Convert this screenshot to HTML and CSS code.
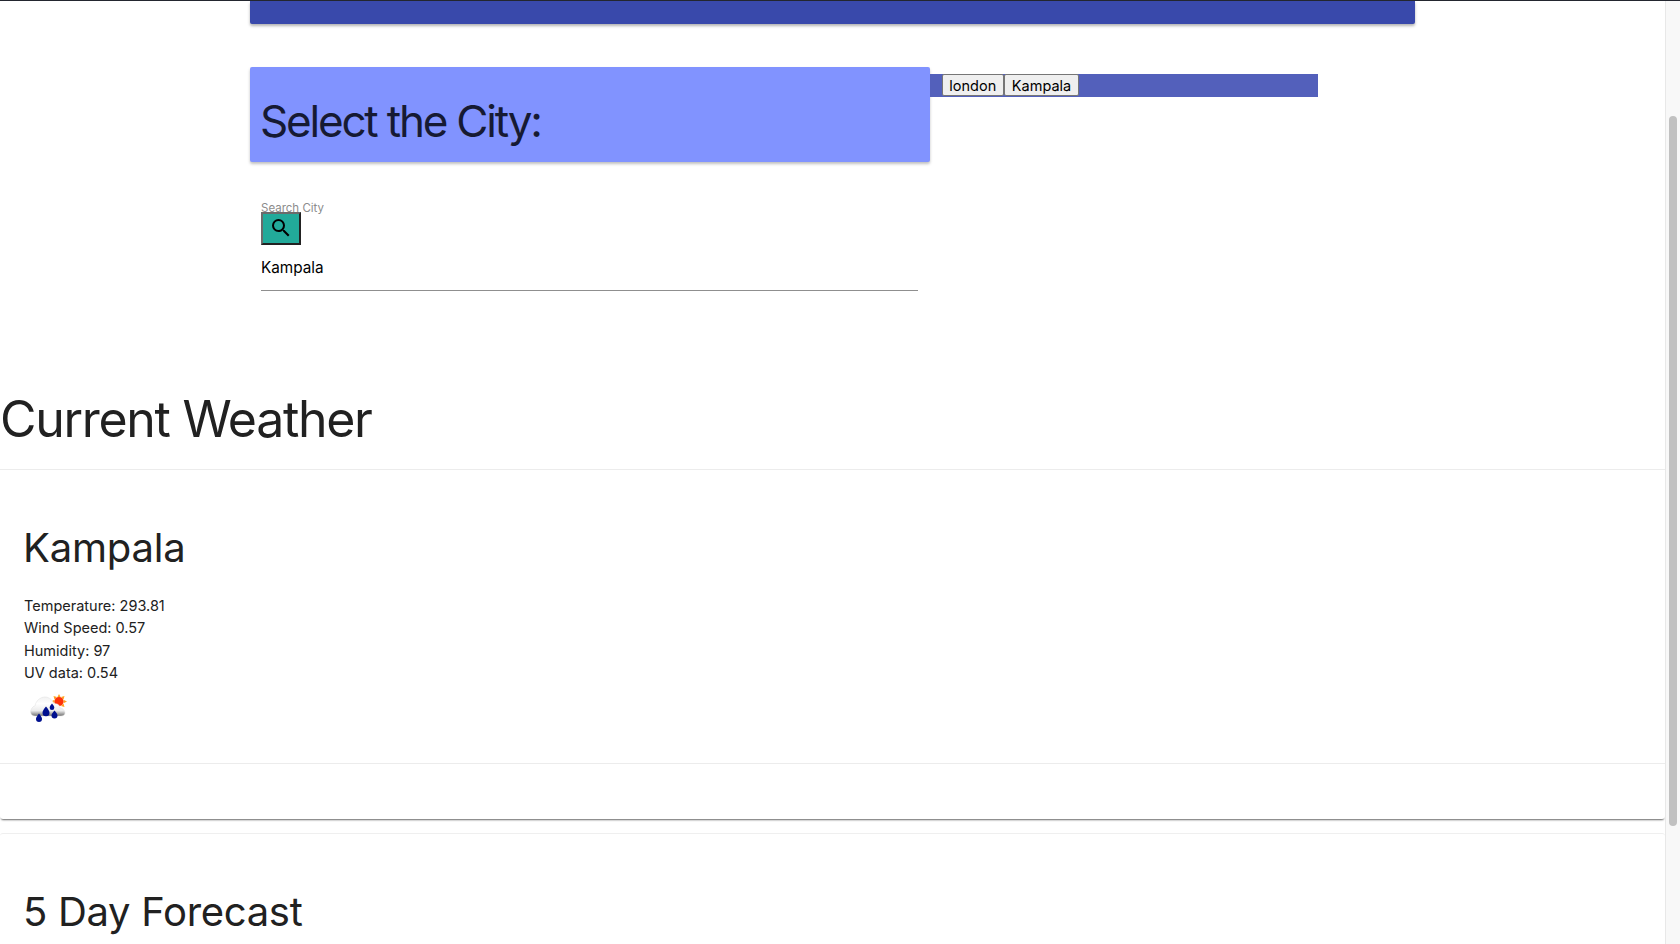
FILE: index.html
```html
<!DOCTYPE html>
<html>
<head>
  <title>Weather Dashboard</title>
  <meta name="viewport" content="width=device-width, initial-scale=1.0">
  <link rel="stylesheet" href="styles.css">
</head>
<body>
  <div class="page">
    <main class="content">
      <div class="wrapper">
        <header class="topbar"></header>

        <div class="city-row">
          <div class="city-box">
            <h2>Select the City:</h2>
          </div>
          <div class="history">
            <button class="history-btn">london</button>
            <button class="history-btn">Kampala</button>
          </div>
        </div>

        <form class="search">
          <label class="search-label">Search City</label>
          <button class="search-btn" type="button">
            <svg viewBox="0 0 24 24" width="24" height="24"><path d="M15.5 14h-.79l-.28-.27A6.471 6.471 0 0 0 16 9.5 6.5 6.5 0 1 0 9.5 16c1.61 0 3.09-.59 4.23-1.57l.27.28v.79l5 4.99L20.49 19l-4.99-5zm-6 0C7.01 14 5 11.99 5 9.5S7.01 5 9.5 5 14 7.01 14 9.5 11.99 14 9.5 14z"/></svg>
          </button>
          <div class="search-value">Kampala</div>
        </form>
      </div>

      <section class="current">
        <h1 class="current-title">Current Weather</h1>
        <div class="card">
          <div class="card-body">
            <h2 class="card-city">Kampala</h2>
            <p class="stat">Temperature: 293.81</p>
            <p class="stat">Wind Speed: 0.57</p>
            <p class="stat">Humidity: 97</p>
            <p class="stat">UV data: 0.54</p>
            <svg class="weather-icon" viewBox="0 0 37 28" width="37" height="28">
              <defs>
                <linearGradient id="cloud" x1="0" y1="0" x2="0" y2="1">
                  <stop offset="0" stop-color="#f1f1f1"/>
                  <stop offset="0.35" stop-color="#fff"/>
                  <stop offset="0.72" stop-color="#ececec"/>
                  <stop offset="1" stop-color="#6f6f6f"/>
                </linearGradient>
              </defs>
              <path d="M29 0l1.800 3.500h-3.600zM37 7.500l-3.500 1.800V5.700zM21 7.500l3.500-1.800v3.600zM23.500 2l3.500 1-2.500 2.500zM34.500 2L33.500 5.500 31 3zM34.500 13L31 12l2.500-2.500z" fill="#ffa321"/>
              <circle cx="29" cy="7.500" r="4.500" fill="#ff3208"/>
              <path d="M5 22C1 22 0 18 1 16c1-3 3-4 4-4C6 6 11 3 15 3c5 0 8 4 9 7 3-1 6 1 6 4 3 0 5 3 5 5 0 2-2 3-4 3z" fill="url(#cloud)" stroke="#dedede" stroke-width="0.500"/>
              <g fill="#00108f">
                <path d="M9 19.500c2 2.500 3 4 3 5.500a3 3 0 0 1-6 0c0-1.500 1-3 3-5.500z"/>
                <path d="M16 12.500c2.200 2.700 3.500 4.500 3.500 6.300a3.500 3.500 0 0 1-7 0c0-1.800 1.300-3.600 3.500-6.300z"/>
                <path d="M22 9.500c1.500 1.800 2.300 3 2.300 4.300a2.300 2.300 0 0 1-4.600 0c0-1.300.8-2.500 2.300-4.300z"/>
                <path d="M24.500 16.500c1.800 2.200 3 3.700 3 5a3 3 0 0 1-6 0c0-1.300 1.200-2.800 3-5z"/>
              </g>
            </svg>
          </div>
          <div class="card-footer"></div>
        </div>
      </section>

      <section class="forecast">
        <h2 class="forecast-title">5 Day Forecast</h2>
      </section>
    </main>

    <aside class="scrollbar">
      <div class="scrollbar-thumb"></div>
    </aside>
  </div>
</body>
</html>
```

FILE: styles.css
```css
* {
  box-sizing: border-box;
}

html, body {
  margin: 0;
  height: 100%;
  overflow: hidden;
}

body {
  font-family: Inter, "Liberation Sans", sans-serif;
  background-color: #fff;
  color: #212121;
}

h1, h2, p {
  margin: 0;
  font-weight: 400;
}

.page {
  display: flex;
  height: 944px;
  border-top: 1px solid #23262f;
}

.content {
  flex: 1;
  min-width: 0;
  overflow: hidden;
}

.wrapper {
  width: 1165px;
  margin-left: 250px;
}

.topbar {
  height: 23px;
  background-color: #3949ab;
  border-radius: 0 0 2px 2px;
  box-shadow: 0 2px 3px rgba(0, 0, 0, 0.3);
}

.city-row {
  display: flex;
  align-items: flex-start;
  margin-top: 43px;
}

.city-box {
  width: 680px;
  height: 95px;
  padding: 29px 10px 0;
  background-color: #8193ff;
  border-radius: 2px;
  box-shadow: 0 2px 3px rgba(0, 0, 0, 0.25);
}

.city-box h2 {
  font-size: 44px;
  line-height: 50px;
  letter-spacing: -2.200px;
  color: #161a33;
}

.history {
  display: flex;
  width: 388px;
  height: 23px;
  margin-top: 7px;
  padding-left: 11.500px;
  background-color: #5360bb;
}

.history-btn {
  height: 22px;
  padding: 0 6.800px;
  font-family: inherit;
  font-size: 14.500px;
  color: #000;
  background-color: #efefef;
  border: 1px solid #767676;
  border-radius: 2px;
}

.search {
  width: 680px;
  padding: 0 12px 0 11px;
  margin-top: 39px;
}

.search-label {
  display: block;
  height: 11px;
  font-size: 11.500px;
  line-height: 14px;
  color: #8c8c8c;
}

.search-btn {
  display: block;
  width: 40px;
  height: 33px;
  padding: 0;
  background-color: #22aa9a;
  border: 2px solid;
  border-color: #6b6b6b #222 #222 #6b6b6b;
}

.search-btn svg {
  display: block;
  margin: 0 0 2px 6px;
}

.search-value {
  height: 46px;
  padding-top: 13px;
  font-size: 15.300px;
  line-height: 20px;
  color: #000;
  border-bottom: 1px solid #8f8f8f;
}

.current {
  margin-top: 94px;
}

.current-title {
  height: 84px;
  padding-top: 5px;
  font-size: 50px;
  line-height: 58px;
  letter-spacing: -1.300px;
}

.card {
  border-top: 1px solid #ececec;
  border-radius: 0 0 3px 3px;
  box-shadow: 0 2px 2px -1px rgba(0, 0, 0, 0.6);
}

.card-body {
  height: 294px;
  padding: 54px 23px 0;
  border-bottom: 1px solid #ececec;
}

.card-city {
  margin-bottom: 23px;
  font-size: 40px;
  line-height: 48px;
  letter-spacing: -0.200px;
}

.stat {
  padding-left: 1px;
  font-size: 14.500px;
  line-height: 22.400px;
}

.weather-icon {
  display: block;
  margin: 9px 0 0 7px;
}

.card-footer {
  height: 55px;
}

.forecast {
  margin-top: 14px;
  padding: 54px 23px 0;
  border-top: 1px solid #efefef;
  border-radius: 3px 3px 0 0;
}

.forecast-title {
  font-size: 40px;
  line-height: 48px;
  letter-spacing: -0.300px;
}

.scrollbar {
  flex: none;
  width: 15px;
  padding: 115px 3px 0;
  background-color: #f8f8f8;
  border-left: 1px solid #e8e8e8;
}

.scrollbar-thumb {
  height: 710px;
  background-color: #c1c1c1;
  border-radius: 4px;
}
```
